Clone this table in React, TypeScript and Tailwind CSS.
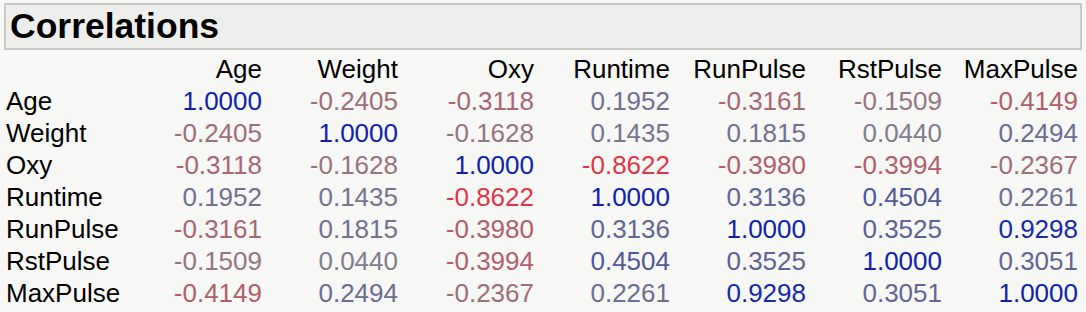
import React from "react";

const names = ["Age", "Weight", "Oxy", "Runtime", "RunPulse", "RstPulse", "MaxPulse"];
const data: number[][] = [
  [1.0, -0.2405, -0.3118, 0.1952, -0.3161, -0.1509, -0.4149],
  [-0.2405, 1.0, -0.1628, 0.1435, 0.1815, 0.044, 0.2494],
  [-0.3118, -0.1628, 1.0, -0.8622, -0.398, -0.3994, -0.2367],
  [0.1952, 0.1435, -0.8622, 1.0, 0.3136, 0.4504, 0.2261],
  [-0.3161, 0.1815, -0.398, 0.3136, 1.0, 0.3525, 0.9298],
  [-0.1509, 0.044, -0.3994, 0.4504, 0.3525, 1.0, 0.3051],
  [-0.4149, 0.2494, -0.2367, 0.2261, 0.9298, 0.3051, 1.0],
];

function colorFor(v: number): string {
  const gray = [134, 130, 138];
  const red = [240, 40, 62];
  const blue = [14, 34, 172];
  const t = Math.min(1, Math.abs(v));
  const target = v < 0 ? red : blue;
  const c = gray.map((g, i) => Math.round(g + (target[i] - g) * Math.pow(t, 1.05)));
  return `rgb(${c[0]},${c[1]},${c[2]})`;
}

export default function App() {
  return (
    <div
      className="w-[1086px] h-[312px] bg-[#f7f7f5] overflow-hidden text-black"
      style={{ fontFamily: '"Liberation Sans", Arial, sans-serif' }}
    >
      <div className="pt-[3px] px-[4px]">
        <div className="h-[47px] w-[1078px] border-2 border-[#c9c9c5] bg-[#eeeeec] flex items-center pl-[4px]">
          <span className="text-[35.5px] font-bold leading-none">Correlations</span>
        </div>
      </div>
      <div className="grid grid-cols-[126px_repeat(7,136px)] mt-[3px] text-[26px] leading-[32px]">
        <div className="h-[32px]" />
        {names.map((n) => (
          <div key={n} className="h-[32px] text-right">
            {n}
          </div>
        ))}
        {data.map((row, r) => (
          <React.Fragment key={r}>
            <div className="h-[32px] pl-[6px]">{names[r]}</div>
            {row.map((v, c) => (
              <div key={c} className="h-[32px] text-right" style={{ color: colorFor(v) }}>
                {v.toFixed(4)}
              </div>
            ))}
          </React.Fragment>
        ))}
      </div>
    </div>
  );
}
